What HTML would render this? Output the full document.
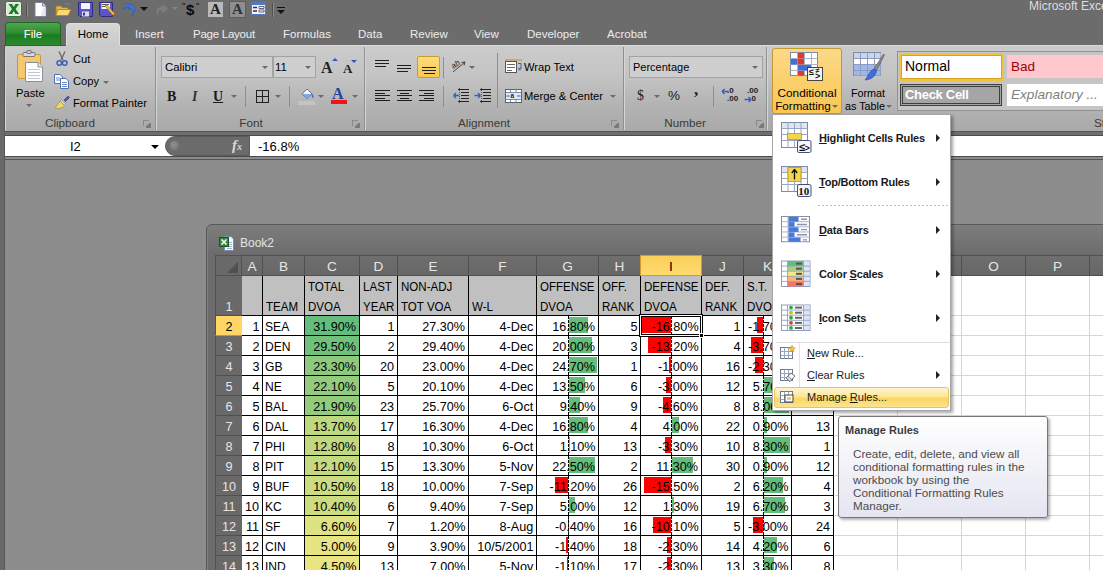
<!DOCTYPE html>
<html lang="en"><head><meta charset="utf-8"><title>Microsoft Excel - Book2</title>
<style>
*{box-sizing:border-box;margin:0;padding:0}
html,body{width:1103px;height:570px;overflow:hidden}
body{position:relative;background:#8d8d8d;font-family:"Liberation Sans",sans-serif;font-size:11.5px;color:#000}
.abs,#top div,#top span,#top i,#top svg,#wb div,#menu div,#menu span,#menu svg,#tip div{position:absolute}
i{font-style:normal;display:block}
/* ---------- top chrome ---------- */
#top{position:absolute;left:0;top:0;width:1103px;height:160px;background:#6c6c6c}
#leftstrip{position:absolute;left:0;top:45px;width:5px;height:525px;background:#696969;border-right:1px solid #575757}
#rib{left:5px;top:45px;width:1100px;height:86px;background:linear-gradient(#cbcbcb 0,#c4c4c4 35%,#b3b3b3 70%,#a9a9a9 100%);border-top:1px solid #dcdcdc;border-left:1px solid #d4d4d4;border-radius:3px 0 0 0}
#ribshadow{left:5px;top:131px;width:1098px;height:5px;background:linear-gradient(#555 0,#555 20%,#6e6e6e 20%,#6e6e6e 80%,#4c4c4c 80%)}
#fbar{left:4px;top:136px;width:1099px;height:20px;background:#fff;border-left:1px solid #505050}
#fbelow{left:5px;top:156px;width:1098px;height:4px;background:linear-gradient(#4c4c4c 0,#4c4c4c 25%,#8b8b8b 25%,#8b8b8b 75%,#555 75%,#555 100%)}
.tab{top:23px;height:22px;line-height:23px;text-align:center;color:#ececec;font-size:11.5px}
#tfile{left:5px;top:22px;width:56px;height:23px;border-radius:4px 4px 0 0;background:linear-gradient(#4fa64f 0,#2f8d30 45%,#1e7a22 55%,#2c8a2e 100%);border:1px solid #1c6a20;border-bottom:none;color:#fff}
#thome{left:66px;width:54px;height:23px;line-height:21px;background:linear-gradient(#d6d6d6,#cbcbcb);border-radius:4px 4px 0 0;color:#000;border:1px solid #dedede;border-bottom:none}
.lbl{font-size:11.2px;white-space:nowrap;line-height:14px;color:#000}
.glbl{top:116px;font-size:11.7px;color:#3a3a3a;white-space:nowrap;line-height:14px;transform:translateX(-50%)}
.gsep{top:47px;width:2px;height:83px;background:linear-gradient(90deg,#8f8f8f 50%,#d6d6d6 50%)}
.launch{top:120px;width:6px;height:6px;border-left:1px solid #8a8a8a;border-top:1px solid #8a8a8a}
.launch:after{content:"";position:absolute;left:2px;top:2px;width:4px;height:4px;border-right:1px solid #7a7a7a;border-bottom:1px solid #7a7a7a;background:linear-gradient(135deg,transparent 50%,#7a7a7a 50%)}
.box{background:#cfcfcf;border:1px solid #a3a3a3;height:22px}
.dd{width:0;height:0;border:3px solid transparent;border-top:3px solid #6a6a6a;border-bottom:none}
.vs{width:1px;background:#8e8e8e}
/* ---------- workbook ---------- */
#win{position:absolute;left:206px;top:224px;width:910px;height:360px;background:linear-gradient(#7d7d7d 0,#6c6c6c 30px,#6c6c6c 100%);border:1px solid #585858;border-radius:6px 0 0 0;box-shadow:inset 1px 1px 0 #808080}
#wtitle{position:absolute;left:240px;top:236px;font-size:12px;color:#e4e4e4;line-height:14px}
#wb{position:absolute;left:0;top:0;width:1103px;height:570px;overflow:hidden;font-size:13px}
.sheet{left:242px;top:276px;width:870px;height:300px;background:#fff}
.gv{top:276px;width:1px;height:300px;background:#d4d6d9}
.gh{left:835px;width:280px;height:1px;background:#d4d6d9}
.corner{left:215px;top:255px;width:27px;height:21px;background:#696969;border:1px solid #525252}
.corner i{position:absolute;right:3px;bottom:2px;width:0;height:0;border-left:11px solid transparent;border-bottom:11px solid #505050}
.ch{top:255px;height:21px;background:linear-gradient(#6e6e6e,#676767);border:1px solid #505050;border-left:none;color:#e6e6e6;text-align:center;line-height:19px;padding-top:1px;font-size:13.6px}
.ch.sel{background:linear-gradient(#f9cf5a,#ffdb6e);color:#000;border-color:#d39a30;box-shadow:-1px 0 0 #d39a30}
.rh{left:215px;width:27px;background:#696969;border-bottom:1px solid #505050;border-left:1px solid #525252;color:#e6e6e6;text-align:center;font-size:13.6px}
.rh span{left:0;right:0;bottom:0px;transform:scaleX(.93);line-height:16px;position:absolute}
.rh.sel{background:#ffd666;color:#000;border-bottom-color:#c29a34}
.c{border-right:1px solid #000;border-bottom:1px solid #000;white-space:nowrap;overflow:hidden}
.c span{position:absolute;bottom:0px;line-height:16px;font-size:13.6px}
.c.r span{right:2.5px;transform:scaleX(.93);transform-origin:100% 50%}
.c.l span{left:2px;transform:scaleX(.89);transform-origin:0 50%}
.c.h1{background:#c0c0c0}
.c.h1 .ht{left:2.5px;bottom:-2px;line-height:20px;font-size:13.6px;transform:scaleX(.85);transform-origin:0 50%}
.bar{position:absolute;top:1px;height:16px}
.axis{position:absolute;top:0;width:1px;height:20px;background:repeating-linear-gradient(#000 0,#000 3px,transparent 3px,transparent 4px)}
.thickr{left:833px;top:276px;width:2px;height:300px;background:#000}
.selbox{left:639px;top:314px;width:64px;height:23px;border:1px solid #000;box-shadow:inset 0 0 0 1px #fff, inset 0 0 0 2px #000}
.selh{left:699px;top:333px;width:5px;height:5px;background:#000;border:1px solid #fff}
/* ---------- menu ---------- */
#menu{position:absolute;left:772px;top:114px;width:179px;height:297px;background:#fff;border:1px solid #a6a6a6;box-shadow:2px 2px 3px rgba(0,0,0,.35)}
#menu .mi{left:46px;font-size:11px;letter-spacing:-.2px;font-weight:bold;white-space:nowrap;line-height:14px;color:#1a1a1a}
#menu .ms{left:34px;font-size:11px;white-space:nowrap;line-height:14px;color:#1a1a1a}
#menu u{text-decoration:underline}
#menu .ar{left:163px;width:0;height:0;border:4px solid transparent;border-left:4px solid #222;border-right:none}
#menu .gut{left:26px;top:228px;width:1px;height:44px;background:#e2e3e3}
#menu .hl{left:1px;top:272px;width:175px;height:21px;border:1px solid #e5c365;border-radius:3px;background:linear-gradient(#fef4cf,#fde69a 45%,#fbd75e 55%,#fce38f)}
#menu .sepd{left:45px;top:90px;width:132px;height:1px;background:repeating-linear-gradient(90deg,#bcbcbc 0,#bcbcbc 2px,transparent 2px,transparent 4px)}
#menu .seps{left:3px;top:227px;width:174px;height:1px;background:#dcdcdc}
/* ---------- tooltip ---------- */
#tip{position:absolute;left:838px;top:416px;width:210px;height:102px;border:1px solid #767676;border-radius:3px;background:linear-gradient(#fff,#e4e5f0);box-shadow:2px 2px 3px rgba(0,0,0,.3);color:#4c4c4c;font-size:11.7px}
#tip b{position:absolute;left:6px;top:6px;line-height:14px;color:#3c3c3c;font-size:11px}
#tip p{position:absolute;left:14px;top:30px;line-height:13px;white-space:nowrap}
</style></head><body>
<div id="top">
<svg style="left:5px;top:1px" width="18" height="17" viewBox="0 0 18 17"><rect x="0.5" y="0.5" width="16" height="15" rx="2" fill="#e9f3e6" stroke="#2c7a2e"/><rect x="2" y="2" width="13" height="12" fill="#d7ead2"/><path d="M3.5 3 L7 3 L8.7 6 L10.5 3 L14 3 L10.6 8 L14 13 L10.5 13 L8.7 10 L7 13 L3.5 13 L7 8 Z" fill="#1f7a25"/></svg>
<i style="position:absolute;left:26px;top:3px;width:2px;height:14px;background:linear-gradient(90deg,#4f4f4f 50%,#8c8c8c 50%)"></i>
<svg style="left:34px;top:2px" width="13" height="15" viewBox="0 0 13 15"><path d="M1 .5H8.5L12 4V14.5H1Z" fill="#fdfdff" stroke="#7d8296"/><path d="M8.5 .5V4H12" fill="#dfe3ee" stroke="#7d8296"/><path d="M9 6H12V14H7Z" fill="#d9deee" opacity=".7"/></svg>
<svg style="left:55px;top:2px" width="17" height="15" viewBox="0 0 17 15"><path d="M1 4H6L7 5.5H13V13H1Z" fill="#e8b84a" stroke="#a97c1c"/><path d="M3 7.5H16L13 13.5H0.8Z" fill="#f7d978" stroke="#b58a25"/><path d="M10 2.5C12 .8 14 1 15 3" fill="none" stroke="#6d89b8"/></svg>
<svg style="left:78px;top:2px" width="15" height="15" viewBox="0 0 15 15"><path d="M.5 .5H14.5V14.5H2L.5 13Z" fill="#5b56c8" stroke="#2f2c86"/><rect x="3" y="1" width="9" height="6" fill="#f2f3fb"/><rect x="4" y="9.5" width="7" height="5" fill="#dcdcea"/><rect x="5" y="10.5" width="2" height="3" fill="#3a3794"/></svg>
<svg style="left:99px;top:2px" width="17" height="15" viewBox="0 0 17 15"><path d="M.5 .5H13.5V14.5H2L.5 13Z" fill="#5b56c8" stroke="#2f2c86"/><rect x="2.5" y="1" width="8.5" height="6" fill="#f2f3fb"/><path d="M3 2.5H10M3 4.5H9" stroke="#555"/><path d="M6 4L8 3L16 12L14 13.5Z" fill="#f0c24b" stroke="#8a6a1a" stroke-width=".6"/><path d="M14 13.5L16 12L16.5 14.5Z" fill="#d33"/></svg>
<svg style="left:122px;top:2px" width="16" height="15" viewBox="0 0 16 15"><path d="M1 7L7.500 4.500L6.500 7C10.500 5.500 13 8.500 9.500 14C14.500 10.500 14.500 2.500 7 2L5.500 1Z" fill="#3f74dc" stroke="#2a56b0" stroke-width=".6"/></svg>
<i class="dd" style="position:absolute;left:140px;top:7px;border-width:4px 4px 0 4px;border-top-color:#111"></i>
<svg style="left:153px;top:2px" width="16" height="15" viewBox="0 0 16 15"><path d="M15 6.5L9.5 2V5C5 4.5 2 7.5 4.5 13.5C4 10 6 8.2 9.5 8.5V11Z" fill="#7c7c7c" stroke="#808080" stroke-width=".4"/></svg>
<i class="dd" style="position:absolute;left:172px;top:7px;border-top-color:#858585"></i>
<span style="left:186px;top:1px;font-size:15px;font-weight:bold;line-height:18px;color:#0a0a0a;letter-spacing:-1px;font-family:'Liberation Sans',sans-serif">$</span>
<span style="left:182px;top:2px;font-size:9px;line-height:9px;color:#0a0a0a">"</span><span style="left:196px;top:2px;font-size:9px;line-height:9px;color:#0a0a0a">"</span>
<span style="left:208px;top:2px;width:15px;height:15px;background:#b9b9b9;font-family:'Liberation Serif',serif;font-weight:bold;font-size:15px;line-height:15px;text-align:center;color:#222">A</span>
<span style="left:229px;top:1px;width:17px;height:17px;background:#8e8e8e;border:1px solid #44618f;font-family:'Liberation Serif',serif;font-weight:bold;font-size:15px;line-height:15px;text-align:center;color:#333">A</span>
<svg style="left:251px;top:2px" width="15" height="14" viewBox="0 0 15 14"><rect x=".5" y=".5" width="14" height="12" fill="#eef2fb" stroke="#5a78c0"/><rect x=".5" y=".5" width="14" height="2.5" fill="#4d78d0"/><path d="M2 5.5H6M2 9H6" stroke="#333" stroke-width="1.4"/><path d="M8 4.5H13V6.5H8ZM8 8H13V10H8Z" fill="#fff" stroke="#667"/></svg>
<i style="position:absolute;left:272px;top:3px;width:2px;height:14px;background:linear-gradient(90deg,#4f4f4f 50%,#8c8c8c 50%)"></i>
<i style="position:absolute;left:277px;top:7px;width:8px;height:1px;background:#111"></i><i class="dd" style="position:absolute;left:277px;top:10px;border-width:4px 4px 0 4px;border-top-color:#111"></i>
<div id="rib"></div>
<div id="ribshadow"></div>
<div id="fbar"></div>
<div id="fbelow"></div>
<div style="left:5px;top:45px;width:61px;height:1px;background:#4f4f4f"></div>
<div class="tab" id="tfile">File</div>
<div class="tab" id="thome">Home</div>
<div class="tab" style="left:135px">Insert</div>
<div class="tab" style="left:193px;letter-spacing:-.25px">Page Layout</div>
<div class="tab" style="left:283px">Formulas</div>
<div class="tab" style="left:358px">Data</div>
<div class="tab" style="left:410px">Review</div>
<div class="tab" style="left:474px">View</div>
<div class="tab" style="left:527px">Developer</div>
<div class="tab" style="left:607px">Acrobat</div>
<div id="apptitle" style="left:1029px;top:-1px;font-size:12px;color:#dedede;white-space:nowrap;line-height:14px">Microsoft Excel</div>
<svg style="left:16px;top:50px" width="28" height="33" viewBox="0 0 28 33"><rect x="1.5" y="4.500" width="23" height="24" rx="1.5" fill="#f3c86f" stroke="#c79a3e"/><rect x="7" y="2.500" width="12" height="4" rx="1" fill="#d9d9d9" stroke="#777"/><rect x="10.500" y=".5" width="5" height="3" rx="1.500" fill="#ccc" stroke="#777"/><path d="M9.500 12.500H22L26.500 17V31.500H9.500Z" fill="#fdfdfd" stroke="#8a8fa0"/><path d="M22 12.500V17H26.500" fill="#e3e6ee" stroke="#8a8fa0"/><path d="M12 19.500H24M12 22.500H24M12 25.500H24M12 28.500H24" stroke="#c3c7d2"/></svg>
<span class="lbl" style="left:16px;top:86px;">Paste</span>
<i class="dd" style="position:absolute;left:26px;top:104px;border-top-color:#6a6a6a"></i>
<svg style="left:56px;top:51px" width="12" height="16" viewBox="0 0 12 16"><path d="M3 .5L7 9M9 .5L5 9" stroke="#666" stroke-width="1.3" fill="none"/><circle cx="3.300" cy="12" r="2.300" fill="none" stroke="#3a5fc0" stroke-width="1.500"/><circle cx="8.700" cy="12" r="2.300" fill="none" stroke="#3a5fc0" stroke-width="1.500"/></svg>
<span class="lbl" style="left:73px;top:52px;">Cut</span>
<svg style="left:54px;top:74px" width="16" height="15" viewBox="0 0 16 15"><path d="M.5 .5H6L8.500 3V9.500H.5Z" fill="#fff" stroke="#4e6fb5"/><path d="M2 4H6M2 6H7" stroke="#4e6fb5" stroke-width=".8"/><path d="M6.500 4.500H12L14.500 7V14.500H6.500Z" fill="#fff" stroke="#4e6fb5"/><path d="M8 8.500H13M8 10.500H13M8 12.500H13" stroke="#4e6fb5" stroke-width=".8"/></svg>
<span class="lbl" style="left:73px;top:74px;">Copy</span>
<i class="dd" style="position:absolute;left:103px;top:81px;border-top-color:#6a6a6a"></i>
<svg style="left:54px;top:95px" width="16" height="16" viewBox="0 0 16 16"><path d="M10 5L14 1L15.500 2.500L11.500 6.500Z" fill="#5656b8" stroke="#34347a" stroke-width=".6"/><path d="M7.500 4.500L12 9L10.500 10.500L6 6Z" fill="#d8d8d8" stroke="#777" stroke-width=".6"/><path d="M6 6L10.500 10.500C8 13.500 4 14.500 1 12.500C3 11 4.500 8.500 6 6Z" fill="#f1d36a" stroke="#a88a2c" stroke-width=".7"/></svg>
<span class="lbl" style="left:73px;top:96px;">Format Painter</span>
<span class="glbl" style="left:70px">Clipboard</span>
<i class="launch" style="position:absolute;left:143px"></i>
<i class="gsep" style="position:absolute;left:155px"></i>
<div class="box" style="left:161px;top:56px;width:112px"></div>
<div class="box" style="left:273px;top:56px;width:43px"></div>
<span class="lbl" style="left:165px;top:60px;font-size:11.4px">Calibri</span>
<i class="dd" style="position:absolute;left:262px;top:66px;border-top-color:#6a6a6a"></i>
<span class="lbl" style="left:275px;top:60px;font-size:11.4px">11</span>
<i class="dd" style="position:absolute;left:305px;top:66px;border-top-color:#6a6a6a"></i>
<span style="left:321px;top:59px;font-family:'Liberation Serif',serif;font-weight:bold;font-size:16px;line-height:18px;color:#222">A</span><i style="position:absolute;left:332px;top:58px;width:0;height:0;border:3px solid transparent;border-bottom:3px solid #2f55c8;border-top:none"></i>
<span style="left:343px;top:62px;font-family:'Liberation Serif',serif;font-weight:bold;font-size:13px;line-height:14px;color:#222">A</span><i style="position:absolute;left:351px;top:60px;width:0;height:0;border:3px solid transparent;border-top:3px solid #2f55c8;border-bottom:none"></i>
<span style="left:167px;top:89px;font-family:'Liberation Serif',serif;font-weight:bold;font-size:14px;line-height:16px;color:#1a1a1a">B</span>
<span style="left:192px;top:89px;font-family:'Liberation Serif',serif;font-style:italic;font-weight:bold;font-size:14px;line-height:16px;color:#333">I</span>
<span style="left:213px;top:89px;font-family:'Liberation Serif',serif;font-weight:bold;font-size:14px;line-height:16px;color:#1a1a1a;text-decoration:underline">U</span>
<i class="dd" style="position:absolute;left:231px;top:95px;border-top-color:#6a6a6a"></i>
<i class="vs" style="position:absolute;left:245px;top:86px;height:21px"></i>
<svg style="left:256px;top:90px" width="14" height="14" viewBox="0 0 14 14"><rect x=".5" y=".5" width="12" height="12" fill="none" stroke="#222"/><path d="M6.500 .5V12.500M.5 6.500H12.500" stroke="#222"/></svg>
<i class="dd" style="position:absolute;left:275px;top:95px;border-top-color:#6a6a6a"></i>
<i class="vs" style="position:absolute;left:289px;top:86px;height:21px"></i>
<svg style="left:298px;top:87px" width="18" height="18" viewBox="0 0 18 18"><path d="M4 7L9 2L14 7L9 12Z" fill="#f4f6fb" stroke="#556" stroke-width=".8"/><path d="M4 7H14L9 12Z" fill="#7aa7e8"/><path d="M13.500 6.500C16 8 16 10.500 15 11.500C14 10 13.500 8.500 13.500 6.500Z" fill="#3c6bd0"/><rect x="0" y="14" width="17" height="4" fill="#c4c4c4"/></svg>
<i class="dd" style="position:absolute;left:318px;top:95px;border-top-color:#6a6a6a"></i>
<span style="left:332px;top:86px;font-family:'Liberation Serif',serif;font-weight:bold;font-size:16px;line-height:16px;color:#2a3f9a">A</span><i style="position:absolute;left:331px;top:100px;width:16px;height:4px;background:#f01414"></i>
<i class="dd" style="position:absolute;left:352px;top:95px;border-top-color:#6a6a6a"></i>
<span class="glbl" style="left:251px">Font</span>
<i class="launch" style="position:absolute;left:352px"></i>
<i class="gsep" style="position:absolute;left:364px"></i>
<i style="position:absolute;left:375px;top:60px;width:14px;height:1.2px;background:#1e1e1e"></i><i style="position:absolute;left:375px;top:63px;width:14px;height:1.2px;background:#1e1e1e"></i><i style="position:absolute;left:375px;top:66px;width:11px;height:1.2px;background:#1e1e1e"></i>
<i style="position:absolute;left:397px;top:65px;width:14px;height:1.2px;background:#1e1e1e"></i><i style="position:absolute;left:397px;top:68px;width:14px;height:1.2px;background:#1e1e1e"></i><i style="position:absolute;left:397px;top:71px;width:11px;height:1.2px;background:#1e1e1e"></i>
<div style="left:417px;top:56px;width:23px;height:22px;border:1px solid #c99d2c;border-radius:2px;background:linear-gradient(#fbdb7c,#f9c84f)"></div>
<i style="position:absolute;left:422.0px;top:67px;width:14px;height:1.2px;background:#1e1e1e"></i><i style="position:absolute;left:422.0px;top:70px;width:14px;height:1.2px;background:#1e1e1e"></i><i style="position:absolute;left:423.5px;top:73px;width:11px;height:1.2px;background:#1e1e1e"></i>
<i class="vs" style="position:absolute;left:443px;top:57px;height:21px"></i>
<svg style="left:451px;top:58px" width="18" height="16" viewBox="0 0 18 16"><path d="M2 14L14 4" stroke="#444"/><path d="M14 4L10.500 4.500M14 4L13 7.500" stroke="#444"/><text x="1" y="9" font-size="8" font-family="Liberation Sans,sans-serif" font-style="italic" fill="#222" transform="rotate(-35 5 8)">ab</text></svg>
<i class="dd" style="position:absolute;left:469px;top:66px;border-top-color:#6a6a6a"></i>
<i class="vs" style="position:absolute;left:497px;top:53px;height:55px"></i>
<svg style="left:505px;top:59px" width="17" height="16" viewBox="0 0 17 16"><rect x=".5" y="2.500" width="11" height="11" fill="#fff" stroke="#555"/><path d="M2 5.500H10M2 8.500H10M2 11.500H7" stroke="#667"/><path d="M0 1H17" stroke="#c78b2a"/><path d="M13 4.500H16V10H13.500M13.500 10L15 8.500M13.500 10L15 11.500" stroke="#3b5fb8" fill="none"/></svg>
<span class="lbl" style="left:524px;top:60px;">Wrap Text</span>
<i style="position:absolute;left:375px;top:90.0px;width:15px;height:1.2px;background:#1e1e1e"></i><i style="position:absolute;left:375px;top:92.5px;width:10px;height:1.2px;background:#1e1e1e"></i><i style="position:absolute;left:375px;top:95.0px;width:15px;height:1.2px;background:#1e1e1e"></i><i style="position:absolute;left:375px;top:97.5px;width:10px;height:1.2px;background:#1e1e1e"></i><i style="position:absolute;left:375px;top:100.0px;width:15px;height:1.2px;background:#1e1e1e"></i>
<i style="position:absolute;left:397.0px;top:90.0px;width:15px;height:1.2px;background:#1e1e1e"></i><i style="position:absolute;left:400.0px;top:92.5px;width:9px;height:1.2px;background:#1e1e1e"></i><i style="position:absolute;left:397.0px;top:95.0px;width:15px;height:1.2px;background:#1e1e1e"></i><i style="position:absolute;left:400.0px;top:97.5px;width:9px;height:1.2px;background:#1e1e1e"></i><i style="position:absolute;left:397.0px;top:100.0px;width:15px;height:1.2px;background:#1e1e1e"></i>
<i style="position:absolute;left:419px;top:90.0px;width:15px;height:1.2px;background:#1e1e1e"></i><i style="position:absolute;left:424px;top:92.5px;width:10px;height:1.2px;background:#1e1e1e"></i><i style="position:absolute;left:419px;top:95.0px;width:15px;height:1.2px;background:#1e1e1e"></i><i style="position:absolute;left:424px;top:97.5px;width:10px;height:1.2px;background:#1e1e1e"></i><i style="position:absolute;left:419px;top:100.0px;width:15px;height:1.2px;background:#1e1e1e"></i>
<i class="vs" style="position:absolute;left:443px;top:86px;height:21px"></i>
<svg style="left:452px;top:88px" width="18" height="16" viewBox="0 0 18 16"><path d="M6 1.500H17M9 4.500H17M9 7.500H17M9 10.500H17M6 13.500H17" stroke="#222"/><path d="M7 7.500H1.500M1.500 7.500L4 5M1.500 7.500L4 10" stroke="#2d5fd0" fill="none" stroke-width="1.300"/><path d="M7.500 0V16" stroke="#555" stroke-dasharray="1 1"/></svg>
<svg style="left:474px;top:88px" width="18" height="16" viewBox="0 0 18 16"><path d="M6 1.500H17M9 4.500H17M9 7.500H17M9 10.500H17M6 13.500H17" stroke="#222"/><path d="M.5 7.500H6.500M6.500 7.500L4 5M6.500 7.500L4 10" stroke="#2d5fd0" fill="none" stroke-width="1.300"/><path d="M7.500 0V16" stroke="#555" stroke-dasharray="1 1"/></svg>
<svg style="left:505px;top:89px" width="17" height="15" viewBox="0 0 17 15"><rect x=".5" y=".5" width="16" height="13" fill="#fff" stroke="#566"/><path d="M.5 3.500H16.500M.5 10.500H16.500M5.500 .5V3.500M11 .5V3.500M5.500 10.500V13.500M11 10.500V13.500" stroke="#7a8aa8"/><rect x="1" y="4" width="15" height="6" fill="#dfe8fb"/><text x="5.500" y="9.300" font-size="6.500" font-weight="bold" font-family="Liberation Sans,sans-serif" fill="#222">a</text><path d="M1.500 7H4.500M12 7H15.500" stroke="#2d5fd0"/></svg>
<span class="lbl" style="left:524px;top:89px;">Merge &amp; Center</span>
<i class="dd" style="position:absolute;left:610px;top:95px;border-top-color:#6a6a6a"></i>
<span class="glbl" style="left:484px">Alignment</span>
<i class="launch" style="position:absolute;left:611px"></i>
<i class="gsep" style="position:absolute;left:623px"></i>
<div class="box" style="left:629px;top:56px;width:134px"></div>
<span class="lbl" style="left:633px;top:60px;font-size:11px">Percentage</span>
<i class="dd" style="position:absolute;left:752px;top:66px;border-top-color:#6a6a6a"></i>
<span style="left:637px;top:88px;font-size:14px;line-height:16px;color:#222;font-family:'Liberation Serif',serif">$</span>
<i class="dd" style="position:absolute;left:654px;top:95px;border-top-color:#6a6a6a"></i>
<span style="left:668px;top:88px;font-size:13.5px;line-height:16px;color:#222">%</span>
<span style="left:694px;top:82px;font-size:17px;font-weight:bold;line-height:16px;color:#222;font-family:'Liberation Serif',serif">,</span>
<i class="vs" style="position:absolute;left:713px;top:86px;height:21px"></i>
<span style="left:727px;top:87px;font-size:8px;line-height:8px;color:#222;font-weight:bold">.0<br>.00</span><svg style="left:721px;top:88px" width="8" height="7" viewBox="0 0 8 7"><path d="M7.500 3.500H1M1 3.500L3.500 1M1 3.500L3.500 6" stroke="#2d5fd0" fill="none" stroke-width="1.300"/></svg>
<span style="left:747px;top:87px;font-size:8px;line-height:8px;color:#222;font-weight:bold">.00<br>&nbsp;.0</span><svg style="left:744px;top:96px" width="8" height="7" viewBox="0 0 8 7"><path d="M.5 3.500H7M7 3.500L4.500 1M7 3.500L4.500 6" stroke="#2d5fd0" fill="none" stroke-width="1.300"/></svg>
<span class="glbl" style="left:685px">Number</span>
<i class="launch" style="position:absolute;left:756px"></i>
<i class="gsep" style="position:absolute;left:766px"></i>
<div style="left:772px;top:48px;width:70px;height:66px;border:1px solid #c29a32;border-radius:3px;background:linear-gradient(#fbd98a 0,#fbd272 40%,#f9c653 100%)"></div>
<svg style="left:790px;top:52px" width="34" height="30" viewBox="0 0 34 30"><rect x=".5" y=".5" width="27" height="23" fill="#fff" stroke="#7f8aa6"/><path d="M.5 6.500H27.500M.5 12.500H27.500M.5 18.500H27.500M7.500 .5V23.500M14.500 .5V23.500M21.500 .5V23.500" stroke="#a9b3cc"/><rect x="8" y="1" width="6" height="5.500" fill="#e0392b"/><rect x="8" y="7" width="6" height="5.500" fill="#e0392b"/><rect x="8" y="13" width="13" height="5.500" fill="#3f6fd8"/><rect x="1" y="7" width="6.500" height="5.500" fill="#3f6fd8"/><rect x="8" y="19" width="6" height="4.500" fill="#e0392b"/><rect x="17.500" y="15.500" width="15" height="13" fill="#f4f4f4" stroke="#444"/><text x="19" y="23" font-size="9" font-weight="bold" font-family="Liberation Sans,sans-serif" fill="#111">≤</text><text x="25" y="27" font-size="9" font-weight="bold" font-family="Liberation Sans,sans-serif" fill="#111">&gt;</text><text x="25.5" y="21" font-size="7" font-weight="bold" font-family="Liberation Sans,sans-serif" fill="#111">≠</text></svg>
<span class="lbl" style="left:807px;top:86px;font-size:11.8px;transform:translateX(-50%)">Conditional</span>
<span class="lbl" style="left:803px;top:99px;font-size:11.6px;transform:translateX(-50%)">Formatting</span>
<i class="dd" style="position:absolute;left:832px;top:105px;border-top-color:#6a6a6a"></i>
<svg style="left:853px;top:52px" width="32" height="30" viewBox="0 0 32 30"><rect x=".5" y=".5" width="27" height="23" fill="#fff" stroke="#7f8aa6"/><rect x="1" y="1" width="26.500" height="5" fill="#c9d4ee"/><rect x="1" y="12.500" width="26.500" height="11" fill="#9db8ee"/><path d="M.5 6.500H27.500M.5 12.500H27.500M.5 18.500H27.500M7.500 .5V23.500M14.500 .5V23.500M21.500 .5V23.500" stroke="#8e9bbb"/><path d="M30.500 2L21 17L23.500 18.500L31.500 3Z" fill="#8a8a8a" stroke="#555" stroke-width=".6"/><path d="M21 17C17 18 16 23 12 28C18 28 23 24 23.500 18.500Z" fill="#3d6fd6" stroke="#2a4ea0" stroke-width=".6"/></svg>
<span class="lbl" style="left:868px;top:86px;font-size:10.8px;transform:translateX(-50%)">Format</span>
<span class="lbl" style="left:865px;top:99px;font-size:10.8px;transform:translateX(-50%)">as Table</span>
<i class="dd" style="position:absolute;left:886px;top:105px;border-top-color:#6a6a6a"></i>
<div style="left:897px;top:51px;width:220px;height:60px;background:#c5c5c5;border:1px solid #929292"></div>
<div style="left:899px;top:53px;width:105px;height:28px;background:#fff;border:2px solid #f2c23e;border-radius:2px;box-shadow:0 0 0 1px #d9a520 inset"></div>
<span style="left:905px;top:59px;font-size:14px;line-height:15px;color:#000">Normal</span>
<div style="left:1007px;top:55px;width:100px;height:23px;background:#ffc7ce"></div>
<span style="left:1011px;top:59px;font-size:13.500px;line-height:15px;color:#9c0006">Bad</span>
<div style="left:900px;top:84px;width:102px;height:22px;background:#a5a5a5;border:3px double #3f3f3f"></div>
<span style="left:905px;top:87px;font-size:13px;font-weight:bold;line-height:15px;color:#fff;letter-spacing:-.3px">Check Cell</span>
<div style="left:1007px;top:84px;width:100px;height:22px;background:#fff"></div>
<span style="left:1011px;top:87px;font-size:13.600px;font-style:italic;line-height:15px;color:#7f7f7f">Explanatory ...</span>
<span class="lbl" style="left:1094px;top:116px;color:#3a3a3a;font-size:11.7px">Styles</span>
<span style="left:70px;top:139px;font-size:13px;line-height:15px;color:#000">I2</span>
<i class="dd" style="position:absolute;left:151px;top:145px;border-width:4px 4px 0 4px;border-top-color:#000"></i>
<div style="left:165px;top:136px;width:85px;height:20px;background:#6b6b6b;border-radius:10px 0 0 10px;border:1px solid #5a5a5a"></div>
<div style="left:170px;top:141px;width:9px;height:9px;border-radius:5px;background:radial-gradient(circle at 40% 40%,#8f8f8f,#727272)"></div>
<span style="left:232px;top:137px;font-family:'Liberation Serif',serif;font-style:italic;font-weight:bold;font-size:15px;line-height:16px;color:#d9d9d9">f<span style="position:static;font-size:10px">x</span></span>
<span style="left:258px;top:139px;font-size:13px;line-height:15px;color:#000">-16.8%</span>
</div>
<div id="leftstrip"></div>
<div id="win"></div>
<svg class="abs" style="left:219px;top:235px" width="16" height="16" viewBox="0 0 16 16"><path d="M5.500 1.500H12L14.500 4V15.500H5.500Z" fill="#f4f6fc" stroke="#7d8bb0"/><path d="M8 7.500H13M8 9.500H13M8 11.500H13M8 13.500H13" stroke="#a9b6d6"/><rect x=".5" y="2.500" width="9" height="9" fill="#2c8a3a" stroke="#185a22"/><path d="M2.500 4.500L7.500 9.500M7.500 4.500L2.500 9.500" stroke="#fff" stroke-width="1.600"/></svg><div id="wtitle">Book2</div>
<div id="wb">
<div class="sheet"></div>
<div class="gv" style="left:897px"></div>
<div class="gv" style="left:961px"></div>
<div class="gv" style="left:1025px"></div>
<div class="gv" style="left:1089px"></div>
<div class="gv" style="left:1153px"></div>
<div class="gh" style="top:315px"></div>
<div class="gh" style="top:335px"></div>
<div class="gh" style="top:355px"></div>
<div class="gh" style="top:375px"></div>
<div class="gh" style="top:395px"></div>
<div class="gh" style="top:415px"></div>
<div class="gh" style="top:435px"></div>
<div class="gh" style="top:455px"></div>
<div class="gh" style="top:475px"></div>
<div class="gh" style="top:495px"></div>
<div class="gh" style="top:515px"></div>
<div class="gh" style="top:535px"></div>
<div class="gh" style="top:555px"></div>
<div class="gh" style="top:575px"></div>
<div class="corner"><i></i></div>
<div class="ch" style="left:242px;width:21px">A</div>
<div class="ch" style="left:263px;width:42px">B</div>
<div class="ch" style="left:305px;width:55px">C</div>
<div class="ch" style="left:360px;width:38px">D</div>
<div class="ch" style="left:398px;width:71px">E</div>
<div class="ch" style="left:469px;width:68px">F</div>
<div class="ch" style="left:537px;width:62px">G</div>
<div class="ch" style="left:599px;width:42px">H</div>
<div class="ch sel" style="left:641px;width:61px">I</div>
<div class="ch" style="left:702px;width:42px">J</div>
<div class="ch" style="left:744px;width:48px">K</div>
<div class="ch" style="left:792px;width:42px">L</div>
<div class="ch" style="left:834px;width:64px">M</div>
<div class="ch" style="left:898px;width:64px">N</div>
<div class="ch" style="left:962px;width:64px">O</div>
<div class="ch" style="left:1026px;width:64px">P</div>
<div class="ch" style="left:1090px;width:64px">Q</div>
<div class="rh r1" style="top:276px;height:40px"><span>1</span></div>
<div class="rh sel" style="top:316px;height:20px"><span>2</span></div>
<div class="rh" style="top:336px;height:20px"><span>3</span></div>
<div class="rh" style="top:356px;height:20px"><span>4</span></div>
<div class="rh" style="top:376px;height:20px"><span>5</span></div>
<div class="rh" style="top:396px;height:20px"><span>6</span></div>
<div class="rh" style="top:416px;height:20px"><span>7</span></div>
<div class="rh" style="top:436px;height:20px"><span>8</span></div>
<div class="rh" style="top:456px;height:20px"><span>9</span></div>
<div class="rh" style="top:476px;height:20px"><span>10</span></div>
<div class="rh" style="top:496px;height:20px"><span>11</span></div>
<div class="rh" style="top:516px;height:20px"><span>12</span></div>
<div class="rh" style="top:536px;height:20px"><span>13</span></div>
<div class="rh" style="top:556px;height:20px"><span>14</span></div>
<div class="c h1" style="left:242px;top:276px;width:21px;height:40px"><span class="ht">&nbsp;<br>&nbsp;</span></div>
<div class="c h1" style="left:263px;top:276px;width:42px;height:40px"><span class="ht">&nbsp;<br>TEAM</span></div>
<div class="c h1" style="left:305px;top:276px;width:55px;height:40px"><span class="ht">TOTAL<br>DVOA</span></div>
<div class="c h1" style="left:360px;top:276px;width:38px;height:40px"><span class="ht">LAST<br>YEAR</span></div>
<div class="c h1" style="left:398px;top:276px;width:71px;height:40px"><span class="ht">NON-ADJ<br>TOT VOA</span></div>
<div class="c h1" style="left:469px;top:276px;width:68px;height:40px"><span class="ht">&nbsp;<br>W-L</span></div>
<div class="c h1" style="left:537px;top:276px;width:62px;height:40px"><span class="ht">OFFENSE<br>DVOA</span></div>
<div class="c h1" style="left:599px;top:276px;width:42px;height:40px"><span class="ht">OFF.<br>RANK</span></div>
<div class="c h1" style="left:641px;top:276px;width:61px;height:40px"><span class="ht">DEFENSE<br>DVOA</span></div>
<div class="c h1" style="left:702px;top:276px;width:42px;height:40px"><span class="ht">DEF.<br>RANK</span></div>
<div class="c h1" style="left:744px;top:276px;width:48px;height:40px"><span class="ht">S.T.<br>DVOA</span></div>
<div class="c h1" style="left:792px;top:276px;width:42px;height:40px"><span class="ht">S.T.<br>RANK</span></div>
<div class="c r" style="left:242px;top:316px;width:21px;height:20px;"><span>1</span></div>
<div class="c l" style="left:263px;top:316px;width:42px;height:20px;"><span>SEA</span></div>
<div class="c r" style="left:305px;top:316px;width:55px;height:20px;background:rgb(99,190,123)"><span>31.90%</span></div>
<div class="c r" style="left:360px;top:316px;width:38px;height:20px;"><span>1</span></div>
<div class="c r" style="left:398px;top:316px;width:71px;height:20px;"><span>27.30%</span></div>
<div class="c r" style="left:469px;top:316px;width:68px;height:20px;"><span>4-Dec</span></div>
<div class="c r" style="left:537px;top:316px;width:62px;height:20px;"><i class="bar" style="left:32.0px;width:19.3px;background:#63be7b"></i><i class="axis" style="left:31px"></i><span>16.80%</span></div>
<div class="c r" style="left:599px;top:316px;width:42px;height:20px;"><span>5</span></div>
<div class="c r" style="left:641px;top:316px;width:61px;height:20px;"><i class="bar" style="left:0.3px;width:29.7px;background:#ff0000"></i><i class="axis" style="left:30px"></i><span>-16.80%</span></div>
<div class="c r" style="left:702px;top:316px;width:42px;height:20px;"><span>1</span></div>
<div class="c r" style="left:744px;top:316px;width:48px;height:20px;"><i class="bar" style="left:13.4px;width:5.6px;background:#ff0000"></i><i class="axis" style="left:19px"></i><span>-1.70%</span></div>
<div class="c r" style="left:792px;top:316px;width:42px;height:20px;"><span>7</span></div>
<div class="c r" style="left:242px;top:336px;width:21px;height:20px;"><span>2</span></div>
<div class="c l" style="left:263px;top:336px;width:42px;height:20px;"><span>DEN</span></div>
<div class="c r" style="left:305px;top:336px;width:55px;height:20px;background:rgb(111,193,124)"><span>29.50%</span></div>
<div class="c r" style="left:360px;top:336px;width:38px;height:20px;"><span>2</span></div>
<div class="c r" style="left:398px;top:336px;width:71px;height:20px;"><span>29.40%</span></div>
<div class="c r" style="left:469px;top:336px;width:68px;height:20px;"><span>4-Dec</span></div>
<div class="c r" style="left:537px;top:336px;width:62px;height:20px;"><i class="bar" style="left:32.0px;width:23.0px;background:#63be7b"></i><i class="axis" style="left:31px"></i><span>20.00%</span></div>
<div class="c r" style="left:599px;top:336px;width:42px;height:20px;"><span>3</span></div>
<div class="c r" style="left:641px;top:336px;width:61px;height:20px;"><i class="bar" style="left:6.6px;width:23.4px;background:#ff0000"></i><i class="axis" style="left:30px"></i><span>-13.20%</span></div>
<div class="c r" style="left:702px;top:336px;width:42px;height:20px;"><span>4</span></div>
<div class="c r" style="left:744px;top:336px;width:48px;height:20px;"><i class="bar" style="left:6.8px;width:12.2px;background:#ff0000"></i><i class="axis" style="left:19px"></i><span>-3.70%</span></div>
<div class="c r" style="left:792px;top:336px;width:42px;height:20px;"><span>21</span></div>
<div class="c r" style="left:242px;top:356px;width:21px;height:20px;"><span>3</span></div>
<div class="c l" style="left:263px;top:356px;width:42px;height:20px;"><span>GB</span></div>
<div class="c r" style="left:305px;top:356px;width:55px;height:20px;background:rgb(141,202,125)"><span>23.30%</span></div>
<div class="c r" style="left:360px;top:356px;width:38px;height:20px;"><span>20</span></div>
<div class="c r" style="left:398px;top:356px;width:71px;height:20px;"><span>23.00%</span></div>
<div class="c r" style="left:469px;top:356px;width:68px;height:20px;"><span>4-Dec</span></div>
<div class="c r" style="left:537px;top:356px;width:62px;height:20px;"><i class="bar" style="left:32.0px;width:28.4px;background:#63be7b"></i><i class="axis" style="left:31px"></i><span>24.70%</span></div>
<div class="c r" style="left:599px;top:356px;width:42px;height:20px;"><span>1</span></div>
<div class="c r" style="left:641px;top:356px;width:61px;height:20px;"><i class="bar" style="left:28.2px;width:1.8px;background:#ff0000"></i><i class="axis" style="left:30px"></i><span>-1.00%</span></div>
<div class="c r" style="left:702px;top:356px;width:42px;height:20px;"><span>16</span></div>
<div class="c r" style="left:744px;top:356px;width:48px;height:20px;"><i class="bar" style="left:11.4px;width:7.6px;background:#ff0000"></i><i class="axis" style="left:19px"></i><span>-2.30%</span></div>
<div class="c r" style="left:792px;top:356px;width:42px;height:20px;"><span>27</span></div>
<div class="c r" style="left:242px;top:376px;width:21px;height:20px;"><span>4</span></div>
<div class="c l" style="left:263px;top:376px;width:42px;height:20px;"><span>NE</span></div>
<div class="c r" style="left:305px;top:376px;width:55px;height:20px;background:rgb(147,204,126)"><span>22.10%</span></div>
<div class="c r" style="left:360px;top:376px;width:38px;height:20px;"><span>5</span></div>
<div class="c r" style="left:398px;top:376px;width:71px;height:20px;"><span>20.10%</span></div>
<div class="c r" style="left:469px;top:376px;width:68px;height:20px;"><span>4-Dec</span></div>
<div class="c r" style="left:537px;top:376px;width:62px;height:20px;"><i class="bar" style="left:32.0px;width:15.5px;background:#63be7b"></i><i class="axis" style="left:31px"></i><span>13.50%</span></div>
<div class="c r" style="left:599px;top:376px;width:42px;height:20px;"><span>6</span></div>
<div class="c r" style="left:641px;top:376px;width:61px;height:20px;"><i class="bar" style="left:24.7px;width:5.3px;background:#ff0000"></i><i class="axis" style="left:30px"></i><span>-3.00%</span></div>
<div class="c r" style="left:702px;top:376px;width:42px;height:20px;"><span>12</span></div>
<div class="c r" style="left:744px;top:376px;width:48px;height:20px;"><i class="bar" style="left:20.0px;width:17.7px;background:#63be7b"></i><i class="axis" style="left:19px"></i><span>5.70%</span></div>
<div class="c r" style="left:792px;top:376px;width:42px;height:20px;"><span>3</span></div>
<div class="c r" style="left:242px;top:396px;width:21px;height:20px;"><span>5</span></div>
<div class="c l" style="left:263px;top:396px;width:42px;height:20px;"><span>BAL</span></div>
<div class="c r" style="left:305px;top:396px;width:55px;height:20px;background:rgb(148,204,126)"><span>21.90%</span></div>
<div class="c r" style="left:360px;top:396px;width:38px;height:20px;"><span>23</span></div>
<div class="c r" style="left:398px;top:396px;width:71px;height:20px;"><span>25.70%</span></div>
<div class="c r" style="left:469px;top:396px;width:68px;height:20px;"><span>6-Oct</span></div>
<div class="c r" style="left:537px;top:396px;width:62px;height:20px;"><i class="bar" style="left:32.0px;width:10.8px;background:#63be7b"></i><i class="axis" style="left:31px"></i><span>9.40%</span></div>
<div class="c r" style="left:599px;top:396px;width:42px;height:20px;"><span>9</span></div>
<div class="c r" style="left:641px;top:396px;width:61px;height:20px;"><i class="bar" style="left:21.9px;width:8.1px;background:#ff0000"></i><i class="axis" style="left:30px"></i><span>-4.60%</span></div>
<div class="c r" style="left:702px;top:396px;width:42px;height:20px;"><span>8</span></div>
<div class="c r" style="left:744px;top:396px;width:48px;height:20px;"><i class="bar" style="left:20.0px;width:24.8px;background:#63be7b"></i><i class="axis" style="left:19px"></i><span>8.00%</span></div>
<div class="c r" style="left:792px;top:396px;width:42px;height:20px;"><span>2</span></div>
<div class="c r" style="left:242px;top:416px;width:21px;height:20px;"><span>6</span></div>
<div class="c l" style="left:263px;top:416px;width:42px;height:20px;"><span>DAL</span></div>
<div class="c r" style="left:305px;top:416px;width:55px;height:20px;background:rgb(188,216,128)"><span>13.70%</span></div>
<div class="c r" style="left:360px;top:416px;width:38px;height:20px;"><span>17</span></div>
<div class="c r" style="left:398px;top:416px;width:71px;height:20px;"><span>16.30%</span></div>
<div class="c r" style="left:469px;top:416px;width:68px;height:20px;"><span>4-Dec</span></div>
<div class="c r" style="left:537px;top:416px;width:62px;height:20px;"><i class="bar" style="left:32.0px;width:19.3px;background:#63be7b"></i><i class="axis" style="left:31px"></i><span>16.80%</span></div>
<div class="c r" style="left:599px;top:416px;width:42px;height:20px;"><span>4</span></div>
<div class="c r" style="left:641px;top:416px;width:61px;height:20px;"><i class="bar" style="left:31.0px;width:7.4px;background:#63be7b"></i><i class="axis" style="left:30px"></i><span>4.00%</span></div>
<div class="c r" style="left:702px;top:416px;width:42px;height:20px;"><span>22</span></div>
<div class="c r" style="left:744px;top:416px;width:48px;height:20px;"><i class="bar" style="left:20.0px;width:2.8px;background:#63be7b"></i><i class="axis" style="left:19px"></i><span>0.90%</span></div>
<div class="c r" style="left:792px;top:416px;width:42px;height:20px;"><span>13</span></div>
<div class="c r" style="left:242px;top:436px;width:21px;height:20px;"><span>7</span></div>
<div class="c l" style="left:263px;top:436px;width:42px;height:20px;"><span>PHI</span></div>
<div class="c r" style="left:305px;top:436px;width:55px;height:20px;background:rgb(192,217,128)"><span>12.80%</span></div>
<div class="c r" style="left:360px;top:436px;width:38px;height:20px;"><span>8</span></div>
<div class="c r" style="left:398px;top:436px;width:71px;height:20px;"><span>10.30%</span></div>
<div class="c r" style="left:469px;top:436px;width:68px;height:20px;"><span>6-Oct</span></div>
<div class="c r" style="left:537px;top:436px;width:62px;height:20px;"><i class="bar" style="left:32.0px;width:1.3px;background:#63be7b"></i><i class="axis" style="left:31px"></i><span>1.10%</span></div>
<div class="c r" style="left:599px;top:436px;width:42px;height:20px;"><span>13</span></div>
<div class="c r" style="left:641px;top:436px;width:61px;height:20px;"><i class="bar" style="left:24.2px;width:5.8px;background:#ff0000"></i><i class="axis" style="left:30px"></i><span>-3.30%</span></div>
<div class="c r" style="left:702px;top:436px;width:42px;height:20px;"><span>10</span></div>
<div class="c r" style="left:744px;top:436px;width:48px;height:20px;"><i class="bar" style="left:20.0px;width:25.7px;background:#63be7b"></i><i class="axis" style="left:19px"></i><span>8.30%</span></div>
<div class="c r" style="left:792px;top:436px;width:42px;height:20px;"><span>1</span></div>
<div class="c r" style="left:242px;top:456px;width:21px;height:20px;"><span>8</span></div>
<div class="c l" style="left:263px;top:456px;width:42px;height:20px;"><span>PIT</span></div>
<div class="c r" style="left:305px;top:456px;width:55px;height:20px;background:rgb(196,218,129)"><span>12.10%</span></div>
<div class="c r" style="left:360px;top:456px;width:38px;height:20px;"><span>15</span></div>
<div class="c r" style="left:398px;top:456px;width:71px;height:20px;"><span>13.30%</span></div>
<div class="c r" style="left:469px;top:456px;width:68px;height:20px;"><span>5-Nov</span></div>
<div class="c r" style="left:537px;top:456px;width:62px;height:20px;"><i class="bar" style="left:32.0px;width:25.9px;background:#63be7b"></i><i class="axis" style="left:31px"></i><span>22.50%</span></div>
<div class="c r" style="left:599px;top:456px;width:42px;height:20px;"><span>2</span></div>
<div class="c r" style="left:641px;top:456px;width:61px;height:20px;"><i class="bar" style="left:31.0px;width:20.9px;background:#63be7b"></i><i class="axis" style="left:30px"></i><span>11.30%</span></div>
<div class="c r" style="left:702px;top:456px;width:42px;height:20px;"><span>30</span></div>
<div class="c r" style="left:744px;top:456px;width:48px;height:20px;"><i class="bar" style="left:20.0px;width:2.8px;background:#63be7b"></i><i class="axis" style="left:19px"></i><span>0.90%</span></div>
<div class="c r" style="left:792px;top:456px;width:42px;height:20px;"><span>12</span></div>
<div class="c r" style="left:242px;top:476px;width:21px;height:20px;"><span>9</span></div>
<div class="c l" style="left:263px;top:476px;width:42px;height:20px;"><span>BUF</span></div>
<div class="c r" style="left:305px;top:476px;width:55px;height:20px;background:rgb(204,220,129)"><span>10.50%</span></div>
<div class="c r" style="left:360px;top:476px;width:38px;height:20px;"><span>18</span></div>
<div class="c r" style="left:398px;top:476px;width:71px;height:20px;"><span>10.00%</span></div>
<div class="c r" style="left:469px;top:476px;width:68px;height:20px;"><span>7-Sep</span></div>
<div class="c r" style="left:537px;top:476px;width:62px;height:20px;"><i class="bar" style="left:17.6px;width:13.4px;background:#ff0000"></i><i class="axis" style="left:31px"></i><span>-11.20%</span></div>
<div class="c r" style="left:599px;top:476px;width:42px;height:20px;"><span>26</span></div>
<div class="c r" style="left:641px;top:476px;width:61px;height:20px;"><i class="bar" style="left:2.6px;width:27.4px;background:#ff0000"></i><i class="axis" style="left:30px"></i><span>-15.50%</span></div>
<div class="c r" style="left:702px;top:476px;width:42px;height:20px;"><span>2</span></div>
<div class="c r" style="left:744px;top:476px;width:48px;height:20px;"><i class="bar" style="left:20.0px;width:19.2px;background:#63be7b"></i><i class="axis" style="left:19px"></i><span>6.20%</span></div>
<div class="c r" style="left:792px;top:476px;width:42px;height:20px;"><span>4</span></div>
<div class="c r" style="left:242px;top:496px;width:21px;height:20px;"><span>10</span></div>
<div class="c l" style="left:263px;top:496px;width:42px;height:20px;"><span>KC</span></div>
<div class="c r" style="left:305px;top:496px;width:55px;height:20px;background:rgb(204,220,129)"><span>10.40%</span></div>
<div class="c r" style="left:360px;top:496px;width:38px;height:20px;"><span>6</span></div>
<div class="c r" style="left:398px;top:496px;width:71px;height:20px;"><span>9.40%</span></div>
<div class="c r" style="left:469px;top:496px;width:68px;height:20px;"><span>7-Sep</span></div>
<div class="c r" style="left:537px;top:496px;width:62px;height:20px;"><i class="bar" style="left:32.0px;width:5.8px;background:#63be7b"></i><i class="axis" style="left:31px"></i><span>5.00%</span></div>
<div class="c r" style="left:599px;top:496px;width:42px;height:20px;"><span>12</span></div>
<div class="c r" style="left:641px;top:496px;width:61px;height:20px;"><i class="bar" style="left:31.0px;width:2.4px;background:#63be7b"></i><i class="axis" style="left:30px"></i><span>1.30%</span></div>
<div class="c r" style="left:702px;top:496px;width:42px;height:20px;"><span>19</span></div>
<div class="c r" style="left:744px;top:496px;width:48px;height:20px;"><i class="bar" style="left:20.0px;width:20.8px;background:#63be7b"></i><i class="axis" style="left:19px"></i><span>6.70%</span></div>
<div class="c r" style="left:792px;top:496px;width:42px;height:20px;"><span>3</span></div>
<div class="c r" style="left:242px;top:516px;width:21px;height:20px;"><span>11</span></div>
<div class="c l" style="left:263px;top:516px;width:42px;height:20px;"><span>SF</span></div>
<div class="c r" style="left:305px;top:516px;width:55px;height:20px;background:rgb(223,226,130)"><span>6.60%</span></div>
<div class="c r" style="left:360px;top:516px;width:38px;height:20px;"><span>7</span></div>
<div class="c r" style="left:398px;top:516px;width:71px;height:20px;"><span>1.20%</span></div>
<div class="c r" style="left:469px;top:516px;width:68px;height:20px;"><span>8-Aug</span></div>
<div class="c r" style="left:537px;top:516px;width:62px;height:20px;"><i class="bar" style="left:30.5px;width:0.5px;background:#ff0000"></i><i class="axis" style="left:31px"></i><span>-0.40%</span></div>
<div class="c r" style="left:599px;top:516px;width:42px;height:20px;"><span>16</span></div>
<div class="c r" style="left:641px;top:516px;width:61px;height:20px;"><i class="bar" style="left:12.1px;width:17.9px;background:#ff0000"></i><i class="axis" style="left:30px"></i><span>-10.10%</span></div>
<div class="c r" style="left:702px;top:516px;width:42px;height:20px;"><span>5</span></div>
<div class="c r" style="left:744px;top:516px;width:48px;height:20px;"><i class="bar" style="left:9.1px;width:9.9px;background:#ff0000"></i><i class="axis" style="left:19px"></i><span>-3.00%</span></div>
<div class="c r" style="left:792px;top:516px;width:42px;height:20px;"><span>24</span></div>
<div class="c r" style="left:242px;top:536px;width:21px;height:20px;"><span>12</span></div>
<div class="c l" style="left:263px;top:536px;width:42px;height:20px;"><span>CIN</span></div>
<div class="c r" style="left:305px;top:536px;width:55px;height:20px;background:rgb(231,228,131)"><span>5.00%</span></div>
<div class="c r" style="left:360px;top:536px;width:38px;height:20px;"><span>9</span></div>
<div class="c r" style="left:398px;top:536px;width:71px;height:20px;"><span>3.90%</span></div>
<div class="c r" style="left:469px;top:536px;width:68px;height:20px;"><span>10/5/2001</span></div>
<div class="c r" style="left:537px;top:536px;width:62px;height:20px;"><i class="bar" style="left:29.3px;width:1.7px;background:#ff0000"></i><i class="axis" style="left:31px"></i><span>-1.40%</span></div>
<div class="c r" style="left:599px;top:536px;width:42px;height:20px;"><span>18</span></div>
<div class="c r" style="left:641px;top:536px;width:61px;height:20px;"><i class="bar" style="left:25.9px;width:4.1px;background:#ff0000"></i><i class="axis" style="left:30px"></i><span>-2.30%</span></div>
<div class="c r" style="left:702px;top:536px;width:42px;height:20px;"><span>14</span></div>
<div class="c r" style="left:744px;top:536px;width:48px;height:20px;"><i class="bar" style="left:20.0px;width:13.0px;background:#63be7b"></i><i class="axis" style="left:19px"></i><span>4.20%</span></div>
<div class="c r" style="left:792px;top:536px;width:42px;height:20px;"><span>6</span></div>
<div class="c r" style="left:242px;top:556px;width:21px;height:20px;"><span>13</span></div>
<div class="c l" style="left:263px;top:556px;width:42px;height:20px;"><span>IND</span></div>
<div class="c r" style="left:305px;top:556px;width:55px;height:20px;background:rgb(233,229,131)"><span>4.50%</span></div>
<div class="c r" style="left:360px;top:556px;width:38px;height:20px;"><span>13</span></div>
<div class="c r" style="left:398px;top:556px;width:71px;height:20px;"><span>7.00%</span></div>
<div class="c r" style="left:469px;top:556px;width:68px;height:20px;"><span>5-Nov</span></div>
<div class="c r" style="left:537px;top:556px;width:62px;height:20px;"><i class="bar" style="left:29.7px;width:1.3px;background:#ff0000"></i><i class="axis" style="left:31px"></i><span>-1.10%</span></div>
<div class="c r" style="left:599px;top:556px;width:42px;height:20px;"><span>17</span></div>
<div class="c r" style="left:641px;top:556px;width:61px;height:20px;"><i class="bar" style="left:25.9px;width:4.1px;background:#ff0000"></i><i class="axis" style="left:30px"></i><span>-2.30%</span></div>
<div class="c r" style="left:702px;top:556px;width:42px;height:20px;"><span>13</span></div>
<div class="c r" style="left:744px;top:556px;width:48px;height:20px;"><i class="bar" style="left:20.0px;width:10.2px;background:#63be7b"></i><i class="axis" style="left:19px"></i><span>3.30%</span></div>
<div class="c r" style="left:792px;top:556px;width:42px;height:20px;"><span>8</span></div>
<div class="selbox"></div><div class="selh"></div>
</div>
<div id="menu">
<div class="gut"></div><div class="sepd"></div><div class="seps"></div><div class="hl"></div>
<svg style="left:7px;top:6px" width="32" height="32" viewBox="0 0 32 32" preserveAspectRatio="none"><rect x="1.500" y="1.500" width="26" height="25" fill="#fff" stroke="#7f8aa6"/><rect x="2" y="2" width="25" height="5" fill="#dfe5f3"/><path d="M1.500 7.500H27.500M1.500 13.500H27.500M1.500 19.500H27.500M8 1.500V26.500M14.500 1.500V26.500M21 1.500V26.500" stroke="#9aa6c4"/><rect x="7.500" y="12.500" width="14" height="6" fill="#f5d44e" stroke="#b9952a" stroke-width=".8"/><rect x="17.500" y="19.500" width="13.500" height="12" rx="1.500" fill="#f4f6fb" stroke="#44507a"/><text x="19" y="29.500" font-size="11" font-weight="bold" font-family="Liberation Sans,sans-serif" fill="#111">≤</text><text x="24.800" y="30" font-size="8.500" font-weight="bold" font-family="Liberation Sans,sans-serif" fill="#111">&gt;</text></svg>
<svg style="left:7px;top:50px" width="32" height="32" viewBox="0 0 32 32" preserveAspectRatio="none"><rect x="1.500" y="1.500" width="26" height="25" fill="#fff" stroke="#7f8aa6"/><rect x="2" y="2" width="25" height="5" fill="#dfe5f3"/><path d="M1.500 7.500H27.500M1.500 13.500H27.500M1.500 19.500H27.500M8 1.500V26.500M14.500 1.500V26.500M21 1.500V26.500" stroke="#9aa6c4"/><rect x="8" y="2.500" width="13" height="14" fill="#f5d44e" stroke="#b9952a" stroke-width=".8"/><path d="M14.500 14.500V5M14.500 4.500L11.800 8M14.500 4.500L17.200 8" stroke="#111" stroke-width="1.300" fill="none"/><rect x="17.500" y="19.500" width="13.500" height="12" rx="1.500" fill="#f4f6fb" stroke="#44507a"/><text x="18.300" y="30" font-size="11" font-weight="bold" font-family="Liberation Serif,serif" fill="#111">10</text></svg>
<svg style="left:7px;top:101px" width="32" height="30" viewBox="0 0 32 32" preserveAspectRatio="none"><rect x="1.500" y=".5" width="28" height="27" fill="#fff" stroke="#7f8aa6"/><path d="M1.500 6H29.500M1.500 11.500H29.500M1.500 17H29.500M1.500 22.500H29.500M8 .5V27.500" stroke="#aab3ca"/><rect x="8.500" y="1" width="10" height="5" fill="#4a7ad8"/><rect x="8.500" y="6.500" width="6" height="5" fill="#4a7ad8"/><rect x="8.500" y="12" width="10" height="5" fill="#4a7ad8"/><rect x="8.500" y="17.500" width="6" height="5" fill="#4a7ad8"/><rect x="8.500" y="23" width="12" height="4.500" fill="#4a7ad8"/><path d="M21 3.500H27M17 9H27M21 14.500H27M17 20H27M23 25.500H27" stroke="#8a93aa" stroke-width="1.500"/></svg>
<svg style="left:7px;top:145px" width="32" height="32" viewBox="0 0 32 32" preserveAspectRatio="none"><rect x="1.500" y="1" width="28.500" height="25.500" fill="#fff" stroke="#8e9bbb"/><rect x="24" y="1.500" width="5.500" height="24.500" fill="#dbe5f7"/><rect x="7.500" y="1.00" width="16" height="5.100" fill="#63be7b"/><rect x="16" y="2.60" width="6" height="2" fill="#555"/><rect x="7.500" y="6.10" width="16" height="5.100" fill="#a9d27f"/><rect x="16" y="7.70" width="6" height="2" fill="#555"/><rect x="7.500" y="11.20" width="16" height="5.100" fill="#f3e884"/><rect x="16" y="12.80" width="6" height="2" fill="#555"/><rect x="7.500" y="16.30" width="16" height="5.100" fill="#fbb571"/><rect x="16" y="17.90" width="6" height="2" fill="#555"/><rect x="7.500" y="21.40" width="16" height="5.100" fill="#f4746c"/><rect x="16" y="23.00" width="6" height="2" fill="#555"/><path d="M1.500 6.10H30M1.500 11.20H30M1.500 16.30H30M1.500 21.40H30M7.500 1V26.500M23.500 1V26.500" stroke="#93a0c0" stroke-width=".9" fill="none"/></svg>
<svg style="left:7px;top:189px" width="32" height="32" viewBox="0 0 32 32" preserveAspectRatio="none"><rect x="1.500" y="1" width="28.500" height="25.500" fill="#fff" stroke="#8e9bbb"/><rect x="24" y="1.500" width="5.500" height="24.500" fill="#dbe5f7"/><circle cx="11" cy="3.55" r="1.900" fill="#2fa83f"/><rect x="15" y="2.60" width="7" height="2" fill="#666"/><circle cx="11" cy="8.65" r="1.900" fill="#c8c21a"/><rect x="15" y="7.70" width="7" height="2" fill="#666"/><circle cx="11" cy="13.75" r="1.900" fill="#2fa83f"/><rect x="15" y="12.80" width="7" height="2" fill="#666"/><circle cx="11" cy="18.85" r="1.900" fill="#e03a2a"/><rect x="15" y="17.90" width="7" height="2" fill="#666"/><circle cx="11" cy="23.95" r="1.900" fill="#2fa83f"/><rect x="15" y="23.00" width="7" height="2" fill="#666"/><path d="M1.500 6.10H30M1.500 11.20H30M1.500 16.30H30M1.500 21.40H30M7.500 1V26.500M23.500 1V26.500" stroke="#93a0c0" stroke-width=".9" fill="none"/></svg>
<span class="mi" style="top:16px"><u>H</u>ighlight Cells Rules</span>
<i class="ar" style="position:absolute;top:19px"></i>
<span class="mi" style="top:60px"><u>T</u>op/Bottom Rules</span>
<i class="ar" style="position:absolute;top:63px"></i>
<span class="mi" style="top:108px"><u>D</u>ata Bars</span>
<i class="ar" style="position:absolute;top:111px"></i>
<span class="mi" style="top:152px">Color <u>S</u>cales</span>
<i class="ar" style="position:absolute;top:155px"></i>
<span class="mi" style="top:196px"><u>I</u>con Sets</span>
<i class="ar" style="position:absolute;top:199px"></i>
<span class="ms" style="top:231px"><u>N</u>ew Rule...</span>
<span class="ms" style="top:253px"><u>C</u>lear Rules</span>
<i class="ar" style="position:absolute;top:256px"></i>
<span class="ms" style="top:275px">Manage <u>R</u>ules...</span>
<svg style="left:7px;top:230px" width="16" height="16" viewBox="0 0 16 16"><rect x=".5" y="2.500" width="12" height="11" fill="#fff" stroke="#6d7893"/><path d="M.5 6.500H12.500M.5 10.500H12.500M4.500 2.500V13.500M8.500 2.500V13.500" stroke="#9aa5c0"/><path d="M12 0L13 2.500L15.500 3L13.500 4.500L14 7L12 5.500L10 7L10.500 4.500L8.500 3L11 2.500Z" fill="#f4c430" stroke="#b48a14" stroke-width=".4"/></svg>
<svg style="left:7px;top:252px" width="16" height="16" viewBox="0 0 16 16"><rect x=".5" y="2.500" width="12" height="11" fill="#fff" stroke="#6d7893"/><path d="M.5 6.500H12.500M.5 10.500H12.500M4.500 2.500V13.500M8.500 2.500V13.500" stroke="#9aa5c0"/><path d="M6 11L11 6L15 9L10 14.500Z" fill="#f7f7fa" stroke="#555" stroke-width=".8"/><path d="M6 11L8 9L12 12.500L10 14.500Z" fill="#d9dce8" stroke="#555" stroke-width=".6"/></svg>
<svg style="left:7px;top:274px" width="16" height="16" viewBox="0 0 16 16"><rect x=".5" y="2.500" width="12" height="11" fill="#fff" stroke="#6d7893"/><path d="M.5 6.500H12.500M.5 10.500H12.500M4.500 2.500V13.500M8.500 2.500V13.500" stroke="#9aa5c0"/><rect x="5" y="6" width="8" height="7" fill="#fff" stroke="#444"/><rect x="7" y="8" width="4" height="3" fill="#f2cf4a"/></svg>
</div>
<div id="tip"><b>Manage Rules</b><p>Create, edit, delete, and view all<br>conditional formatting rules in the<br>workbook by using the<br>Conditional Formatting Rules<br>Manager.</p></div>
</body></html>
